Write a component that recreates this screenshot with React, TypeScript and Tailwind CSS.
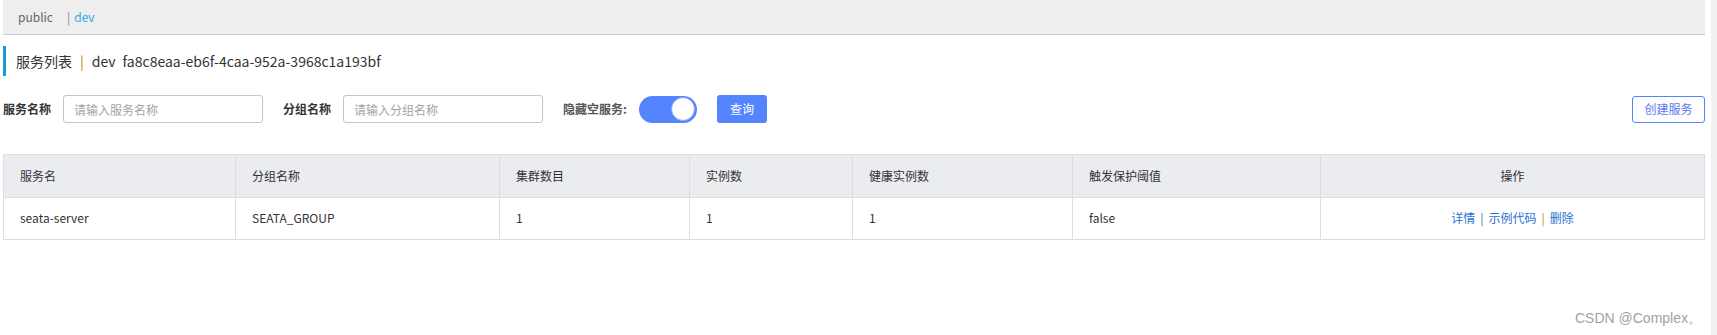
import React from "react";

const columns = [
  { title: "服务名", width: "w-[232px]" },
  { title: "分组名称", width: "w-[264px]" },
  { title: "集群数目", width: "w-[190px]" },
  { title: "实例数", width: "w-[163px]" },
  { title: "健康实例数", width: "w-[220px]" },
  { title: "触发保护阈值", width: "w-[248px]" },
];

const rows = [
  { name: "seata-server", group: "SEATA_GROUP", clusters: "1", instances: "1", healthy: "1", threshold: "false" },
];

function Field({ label, placeholder }: { label: string; placeholder: string }) {
  return (
    <div className="flex items-center">
      <span className="text-[12px] font-bold text-[#333] leading-[28px]">{label}</span>
      <input
        placeholder={placeholder}
        className="ml-[12px] w-[200px] h-[28px] px-[10px] border border-[#c4c6cf] rounded-[3px] text-[12px] text-[#333] placeholder:text-[#a3a3a3] outline-none"
      />
    </div>
  );
}

export default function App() {
  return (
    <div className="flex w-[1717px] h-[335px] bg-white font-['Noto_Sans_CJK_SC',sans-serif] overflow-hidden">
      <div className="relative flex-1 pl-[3px] pr-[6px]">
        {/* namespace bar */}
        <div className="flex items-center h-[35px] pl-[15px] bg-[#eeeeee] border-b border-[#cccccc] text-[12px] leading-none">
          <span className="text-[#666]">public</span>
          <span className="ml-[14px] text-[#7b80a8]">|</span>
          <span className="ml-[4px] text-[#2bb0df]">dev</span>
        </div>

        {/* title */}
        <div className="mt-[11px] flex items-center h-[30px] border-l-[3px] border-[#1b9ad6] pl-[10px] text-[14px] text-[#333] leading-none">
          <span>服务列表</span>
          <span className="mx-[8px] text-[#b97b36]">|</span>
          <span>dev</span>
          <span className="ml-[7px]">fa8c8eaa-eb6f-4caa-952a-3968c1a193bf</span>
        </div>

        {/* filters */}
        <div className="mt-[19px] flex items-center h-[28px]">
          <Field label="服务名称" placeholder="请输入服务名称" />
          <div className="ml-[20px]">
            <Field label="分组名称" placeholder="请输入分组名称" />
          </div>
          <span className="ml-[20px] text-[12px] font-bold text-[#555]">隐藏空服务:</span>
          <button className="ml-[12px] relative w-[58px] h-[27px] rounded-full bg-[#5584ff]">
            <span className="absolute right-[2px] top-[1.5px] w-[24px] h-[24px] rounded-full bg-white border border-[#7fa2ff]" />
          </button>
          <button className="ml-[20px] w-[50px] h-[28px] rounded-[3px] bg-[#5584ff] text-white text-[12px]">
            查询
          </button>
          <button className="ml-auto w-[73px] h-[27px] rounded-[3px] border border-[#5584ff] bg-white text-[#5a78f0] text-[12px]">
            创建服务
          </button>
        </div>

        {/* service table */}
        <table className="mt-[31px] w-[1702px] table-fixed border-collapse text-[12px] text-[#333]">
          <thead>
            <tr className="bg-[#ebecf0]">
              {columns.map((c) => (
                <th key={c.title} className={`${c.width} h-[43px] px-4 border border-[#dcdee3] text-left font-normal`}>
                  {c.title}
                </th>
              ))}
              <th className="h-[43px] px-4 border border-[#dcdee3] text-center font-normal">操作</th>
            </tr>
          </thead>
          <tbody>
            {rows.map((r) => (
              <tr key={r.name}>
                <td className="h-[42px] px-4 pb-[2px] border border-[#dcdee3]">{r.name}</td>
                <td className="h-[42px] px-4 pb-[2px] border border-[#dcdee3]">{r.group}</td>
                <td className="h-[42px] px-4 pb-[2px] border border-[#dcdee3]">{r.clusters}</td>
                <td className="h-[42px] px-4 pb-[2px] border border-[#dcdee3]">{r.instances}</td>
                <td className="h-[42px] px-4 pb-[2px] border border-[#dcdee3]">{r.healthy}</td>
                <td className="h-[42px] px-4 pb-[2px] border border-[#dcdee3]">{r.threshold}</td>
                <td className="h-[42px] px-4 pb-[2px] border border-[#dcdee3] text-center text-[#2a6fd6]">
                  <a className="cursor-pointer">详情</a>
                  <span className="mx-[5px] text-[#3f72c8]">|</span>
                  <a className="cursor-pointer">示例代码</a>
                  <span className="mx-[5px] text-[#c98a3c]">|</span>
                  <a className="cursor-pointer">删除</a>
                </td>
              </tr>
            ))}
          </tbody>
        </table>

        {/* watermark */}
        <span className="absolute right-[9px] top-[309px] font-['Liberation_Sans',sans-serif] text-[14px] leading-[18px] text-[#a3a3a3]">
          CSDN @Complex。
        </span>
      </div>
      <div className="w-[6px] h-full bg-[#f1f1f1]" />
    </div>
  );
}
